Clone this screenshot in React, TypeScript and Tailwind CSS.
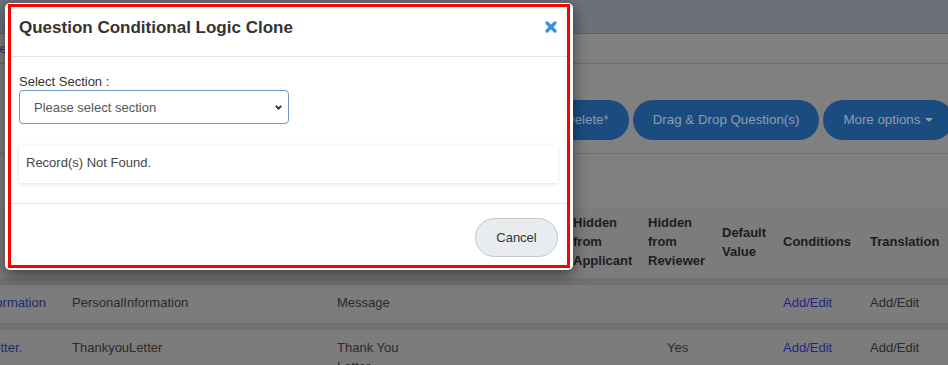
const headCols = [
  { w: "w-[152px]", label: "", pl: "pl-[6px]" },
  { w: "w-[265px]", label: "Label", pl: "" },
  { w: "w-[236px]", label: "Type", pl: "" },
  { w: "w-[75px]", label: "Hidden from Applicant", pl: "" },
  { w: "w-[74px]", label: "Hidden from Reviewer", pl: "" },
  { w: "w-[61px]", label: "Default Value", pl: "" },
  { w: "w-[87px]", label: "Conditions", pl: "" },
  { w: "w-[100px]", label: "Translation", pl: "" },
];

const rows = [
  { name: "Personal Information", label: "PersonalInformation", type: "Message", reviewer: "" },
  { name: "Thank you letter.", label: "ThankyouLetter", type: "Thank You Letter", reviewer: "Yes" },
];

function TimesIcon() {
  return (
    <svg width="12" height="12" viewBox="0 0 12 12" className="shrink-0">
      <path d="M2 2L10 10M10 2L2 10" stroke="#3b8ee6" strokeWidth="3.2" strokeLinecap="round" />
    </svg>
  );
}

function Modal() {
  return (
    <div className="absolute left-[5px] top-[3px] h-[267px] w-[568px] rounded-[5px] bg-white pb-[2px] pl-[3px] pr-[3px] pt-[1px] shadow-[0_5px_15px_rgba(0,0,0,0.5)]">
      <div className="flex h-full flex-col border-[3px] border-[#ff0000]">
        {/* header */}
        <div className="flex h-[50px] shrink-0 items-start justify-between border-b border-[#e5e5e5] pl-[8px] pr-[10px]">
          <h4 className="pt-[12px] text-[17px] font-bold leading-[18px] text-[#333]">
            Question Conditional Logic Clone
          </h4>
          <div className="mt-[14px]">
            <TimesIcon />
          </div>
        </div>

        {/* body */}
        <div className="flex h-[147px] shrink-0 flex-col border-b border-[#e5e5e5] pl-[8px] pr-[9px] pt-[17px]">
          <label className="text-[13px] leading-[15px] text-[#333]">Select Section :</label>
          <div className="relative mt-[1px] h-[34px] w-[270px]">
            <select className="h-full w-full appearance-none rounded-[4px] border border-[#7299c8] bg-white pl-[14px] pt-[1px] text-[13px] text-[#555] outline-none">
              <option>Please select section</option>
            </select>
            <svg
              width="7"
              height="5"
              viewBox="0 0 7 5"
              className="pointer-events-none absolute right-[7px] top-[15px]"
            >
              <path d="M0.8 0.9L3.5 3.6L6.2 0.9" stroke="#333" strokeWidth="1.9" fill="none" />
            </svg>
          </div>
          <div className="mt-[21px] h-[38px] bg-white pl-[7px] pt-[10px] text-[13px] leading-[15px] text-[#444] shadow-[0_1px_4px_rgba(0,0,0,0.13)]">
            Record(s) Not Found.
          </div>
        </div>

        {/* footer */}
        <div className="flex flex-1 justify-end pr-[9px] pt-[14px]">
          <button className="h-[39px] w-[83px] rounded-full border border-[#c4c7cb] bg-[#e9ecef] text-[13px] text-[#333]">
            Cancel
          </button>
        </div>
      </div>
    </div>
  );
}

export default function App() {
  return (
    <div className="relative h-[365px] w-[948px] overflow-hidden bg-[#808080] font-['Liberation_Sans',Arial,sans-serif] text-[13px]">
      {/* dimmed page */}
      <div className="h-[34px] border-b border-[#5f6268] bg-[#6b7079]" />
      <div className="flex h-[30px] items-center border-b border-[#6e6e6e]">
        <span className="-ml-[36px] text-[#1f2f70]">Module</span>
      </div>

      <div className="mt-[36px] flex h-[40px] gap-[4px] pl-[545px]">
        <button className="shrink-0 rounded-full bg-[#1b4c80] px-[20px] text-[13.33px] text-[#8d9db2]">
          Delete*
        </button>
        <button className="shrink-0 rounded-full bg-[#1b4c80] px-[20px] text-[13.33px] text-[#8d9db2]">
          Drag &amp; Drop Question(s)
        </button>
        <button className="flex shrink-0 items-center gap-[5px] rounded-full bg-[#1b4c80] px-[20px] text-[13.33px] text-[#8d9db2]">
          More options
          <span className="border-x-[4px] border-t-[4px] border-x-transparent border-t-[#8d9db2]" />
        </button>
      </div>

      <div className="mt-[13px] border-t border-[#6e6e6e]" />

      <div className="mt-[53px] -ml-[80px]">
        <div className="flex h-[71px] items-center bg-[#7c7c7c] pb-[2px] text-[13px] font-bold leading-[19px] text-[#1c1c1c]">
          {headCols.map((c, i) => (
            <div key={i} className={`${c.w} ${c.pl} shrink-0 pr-[6px]`}>
              {c.label}
            </div>
          ))}
        </div>
        {rows.map((r, i) => (
          <div key={i}>
            <div className="h-[7px] bg-[#717171]" />
            <div className="flex h-[38px] items-start bg-[#7c7c7c] pt-[8px] leading-[19px] text-[#2a2a2a]">
              <div className="w-[152px] shrink-0 pl-[6px] text-[#222a66]">{r.name}</div>
              <div className="w-[265px] shrink-0">{r.label}</div>
              <div className="w-[236px] shrink-0 pr-[150px]">{r.type}</div>
              <div className="w-[75px] shrink-0" />
              <div className="w-[74px] shrink-0 pl-[19px]">{r.reviewer}</div>
              <div className="w-[61px] shrink-0" />
              <div className="w-[87px] shrink-0 text-[#1d2585]">Add/Edit</div>
              <div className="w-[100px] shrink-0">Add/Edit</div>
            </div>
          </div>
        ))}
      </div>

      <Modal />
    </div>
  );
}
